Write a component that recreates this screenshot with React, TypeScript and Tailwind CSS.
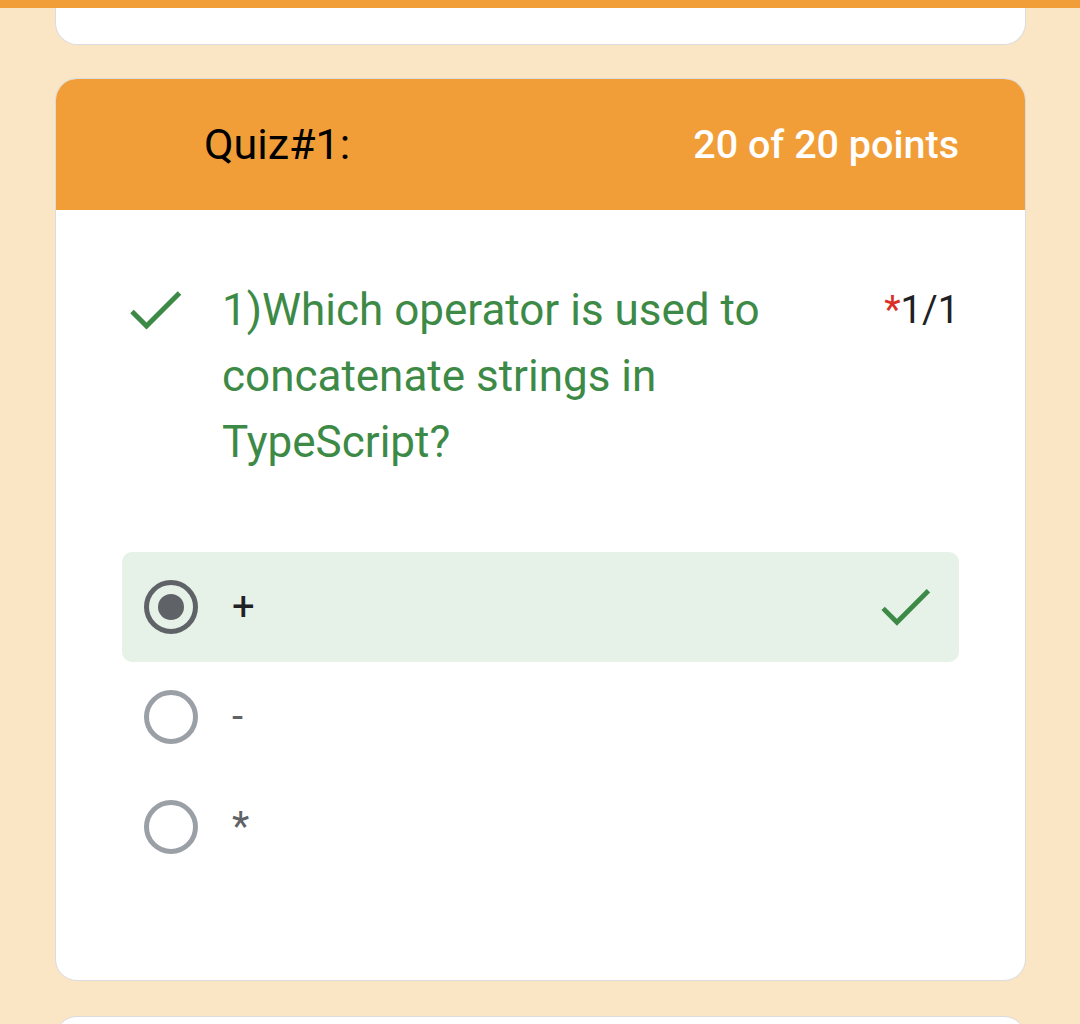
import React from "react";

type Option = { label: string; selected?: boolean; correct?: boolean };

const options: Option[] = [
  { label: "+", selected: true, correct: true },
  { label: "-" },
  { label: "*" },
];

function Check({ className }: { className?: string }) {
  return (
    <svg viewBox="0 0 56 44" className={className} fill="none">
      <path d="M4 23.5L18.5 38L51.5 5" stroke="currentColor" strokeWidth="5" />
    </svg>
  );
}

function Radio({ selected }: { selected?: boolean }) {
  return (
    <div
      className={
        selected
          ? "flex h-[54px] w-[54px] items-center justify-center rounded-full border-[5px] border-[#5f6368]"
          : "flex h-[54px] w-[54px] items-center justify-center rounded-full border-[5px] border-[#9aa0a6]"
      }
    >
      {selected && <div className="h-[26px] w-[26px] rounded-full bg-[#5f6368]" />}
    </div>
  );
}

export default function App() {
  return (
    <div
      className="h-[1024px] overflow-hidden bg-[#fae5c5]"
      style={{ fontFamily: "Roboto, 'Noto Sans', sans-serif" }}
    >
      <div className="h-[8px] bg-[#f19e38]" />

      <div className="ml-[55px] mr-[54px] h-[37px] rounded-b-[22px] border-x border-b border-[#dadce0] bg-white" />

      <div className="ml-[55px] mr-[54px] mt-[33px] overflow-hidden rounded-[22px] border border-[#dadce0] bg-white">
        <div className="flex h-[131px] items-center justify-between bg-[#f19e38] pl-[148px] pr-[66px]">
          <div className="text-[43px] text-black">Quiz#1:</div>
          <div className="text-[39.5px] font-medium text-white">20 of 20 points</div>
        </div>

        <div className="px-[66px] pt-[67px] pb-[98px]">
          <div className="flex items-start">
            <Check className="ml-[6px] mt-[11px] h-[44px] w-[56px] shrink-0 text-[#3d8a47]" />
            <div className="ml-[38px] w-[580px] text-[44px] leading-[66px] text-[#3d8a47]">
              1)Which operator is used to concatenate strings in TypeScript?
            </div>
            <div className="ml-auto text-[38px] leading-[66px] text-[#202124]">
              <span className="text-[#d93025]">*</span>1/1
            </div>
          </div>

          <div className="mt-[77px]">
            {options.map((o) => (
              <div
                key={o.label}
                className={
                  o.selected
                    ? "flex h-[110px] items-center rounded-[10px] bg-[#e6f2e8] pl-[22px] pr-[26px]"
                    : "flex h-[110px] items-center pl-[22px] pr-[26px]"
                }
              >
                <Radio selected={o.selected} />
                <div
                  className={
                    o.selected
                      ? "ml-[34px] text-[40px] text-[#202124]"
                      : "ml-[34px] text-[40px] text-[#5f6368]"
                  }
                >
                  {o.label}
                </div>
                {o.correct && <Check className="ml-auto h-[42px] w-[54px] text-[#3d8a47]" />}
              </div>
            ))}
          </div>
        </div>
      </div>

      <div className="ml-[55px] mr-[54px] mt-[35px] h-[60px] rounded-t-[22px] border border-[#dadce0] bg-white" />
    </div>
  );
}
